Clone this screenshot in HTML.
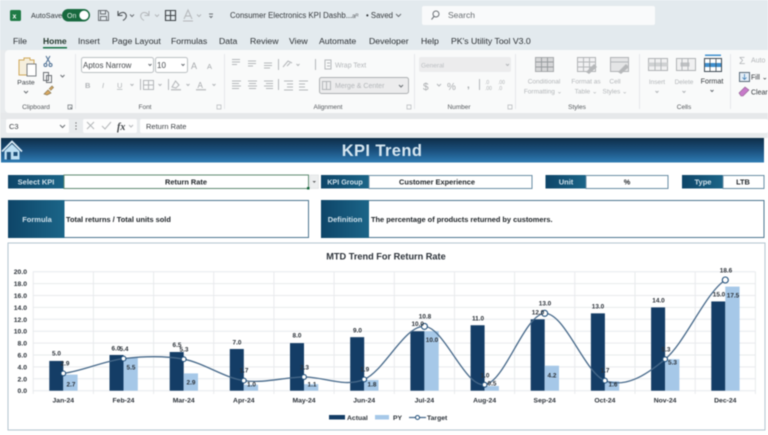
<!DOCTYPE html>
<html lang="en"><head><meta charset="utf-8"><title>KPI Trend</title>
<style>
html,body{margin:0;padding:0;background:#fff;width:768px;height:435px;overflow:hidden}
svg{display:block;filter:blur(.45px)}
text{font-family:"Liberation Sans",sans-serif}
.t{font-size:8.7px;fill:#2b2f33}
.s{font-size:6.5px;fill:#3c4145}
.g{font-size:6.5px;fill:#b3b6b9}
.l{font-size:6.5px;fill:#55595d}
.b{font-size:7.4px;font-weight:bold;fill:#1d2226}
.w{font-size:7.5px;font-weight:bold;fill:#cfe0ea}
.d{font-size:6.4px;font-weight:bold;fill:#2b3138;text-anchor:middle}
.a{font-size:6.8px;font-weight:bold;fill:#2b3138;text-anchor:end}
.m{font-size:6.8px;font-weight:bold;fill:#2b3138;text-anchor:middle}
.c{text-anchor:middle}
.ic{fill:none;stroke:#b4b7ba;stroke-width:1}
.ik{fill:none;stroke:#6b7075;stroke-width:1}
</style></head><body>
<svg width="768" height="435" viewBox="0 0 768 435" xmlns="http://www.w3.org/2000/svg">
<defs>
<linearGradient id="ban" x1="0" y1="0" x2="0" y2="1"><stop offset="0" stop-color="#0e2e48"/><stop offset=".5" stop-color="#1a4f7c"/><stop offset="1" stop-color="#2f7cb4"/></linearGradient>
<linearGradient id="lab" x1="0" y1="0" x2="1" y2="0"><stop offset="0" stop-color="#0e4568"/><stop offset="1" stop-color="#1b6588"/></linearGradient>
</defs>
<rect width="768" height="435" fill="#fff"/>
<rect width="768" height="138" fill="#e8ebed"/>
<rect width="768" height="50" fill="#e3eaee"/>

<!-- title bar -->
<rect x="10" y="10" width="11" height="11" rx="1.5" fill="#1f7a45"/><text x="12.5" y="18.5" style="font-size:7px;font-weight:bold;fill:#fff">x</text>
<text x="31" y="18" style="font-size:7.2px;fill:#33383c">AutoSave</text>
<rect x="62" y="9" width="28" height="12.5" rx="6.2" fill="#17693e"/><text x="67" y="18" style="font-size:7px;fill:#e4f0e9">On</text><circle cx="84" cy="15.2" r="4.6" fill="#fff"/>
<path d="M98.500 10.500h8l2 2v8h-10zM100.500 10.500v3.500h5v-3.500M100.500 20.500v-4h6v4" class="ik"/>
<path d="M118 11v4.500h4.500M118.500 15c2-3 6-3.500 7.500-.5 1 2.200-.5 4.500-3 6" fill="none" stroke="#4e5357" stroke-width="1.100"/><path d="M130 14.500l2 2 2-2" class="ik"/>
<path d="M149 11v4.500h-4.500M148.500 15c-2-3-6-3.500-7.500-.5-1 2.200.5 4.500 3 6" class="ic"/><path d="M155 14.500l2 2 2-2" class="ic"/>
<path d="M165.500 10.500h10v10h-10zM170.500 10.500v10M165.500 15.500h10" fill="none" stroke="#3f4448" stroke-width="1.100"/>
<path d="M184 19l4-9 4 9M185.500 16h5M183 21h10" class="ic"/><path d="M197 14.500l2 2 2-2" class="ic"/>
<path d="M209 14h4M209.500 16l1.500 1.500 1.500-1.500" class="ik"/>
<text x="230" y="18" style="font-size:7.8px;fill:#35393d">Consumer Electronics KPI Dashb...</text>
<text x="352" y="18" style="font-size:6.500px;fill:#55595d">aᴿ</text>
<text x="366" y="18" style="font-size:7.800px;fill:#35393d">• Saved</text><path d="M396 14l2.500 2.500 2.500-2.500" class="ik"/>
<rect x="422" y="6" width="233" height="19" rx="2" fill="#f9fafb"/>
<circle cx="436" cy="14" r="3" class="ik"/><path d="M434 16.500l-2.500 3" class="ik"/>
<text x="448" y="18" style="font-size:8.500px;fill:#686d71">Search</text>

<!-- tabs -->
<g class="t">
<text x="13" y="44" class="t">File</text>
<text x="43" y="44" class="t" style="font-weight:bold;font-size:8.500px;fill:#24382d">Home</text>
<text x="78" y="44" class="t">Insert</text>
<text x="112" y="44" class="t">Page Layout</text>
<text x="171" y="44" class="t">Formulas</text>
<text x="219" y="44" class="t">Data</text>
<text x="250" y="44" class="t">Review</text>
<text x="289" y="44" class="t">View</text>
<text x="319" y="44" class="t">Automate</text>
<text x="369" y="44" class="t">Developer</text>
<text x="421" y="44" class="t">Help</text>
<text x="451" y="44" class="t">PK's Utility Tool V3.0</text>
</g>
<rect x="43" y="47" width="24" height="1.500" fill="#1a7346"/>

<!-- ribbon -->
<rect x="5" y="50" width="780" height="63" rx="4" fill="#f9fafa"/>
<rect x="0" y="113" width="768" height="6" fill="#e6e8ea"/>
<g stroke="#e6e8ea" stroke-width="1">
<path d="M75.500 54v55M224.500 54v55M414.500 54v55M515.500 54v55M639.500 54v55M730.500 54v55"/>
</g>
<!-- clipboard -->
<path d="M19 60h5v-2h6v2h4v4h-7v11h-8z" fill="#f6efdd" stroke="#d0a95c" stroke-width="1"/>
<rect x="27" y="64" width="9" height="12" fill="#fff" stroke="#7a7f84"/>
<text x="26" y="84.500" class="s c" style="font-size:6.800px">Paste</text><path d="M24 91l2 2 2-2" class="ik"/>
<path d="M46 56l4 7M50 56l-4 7" class="ik" style="stroke:#4c6f93"/><circle cx="45.500" cy="65" r="1.500" class="ik" style="stroke:#4c6f93"/><circle cx="50.500" cy="65" r="1.500" class="ik" style="stroke:#4c6f93"/>
<path d="M43.500 72.500h5v8h-5zM46.500 75.500h5v7h-5z" class="ik"/>
<path d="M60.500 75l2 2 2-2" class="ik"/>
<path d="M44 94l4-4 3 3-4 2zM49 89l3-3 1.500 1.500-3 3" fill="#d9a860" stroke="#8b7a55" stroke-width=".7"/>
<text x="36" y="109" class="l c">Clipboard</text><path d="M68 105h4v4h-4zM70 107l2 2" class="ik" style="stroke-width:.7"/>
<!-- font -->
<rect x="81.500" y="57.500" width="72" height="15" rx="2" fill="#fff" stroke="#bcc0c3"/>
<text x="83" y="68" style="font-size:8px;fill:#45494d">Aptos Narrow</text><path d="M148.500 64l1.500 1.500 1.500-1.500" class="ik"/>
<rect x="155.500" y="57.500" width="32" height="15" rx="2" fill="#fff" stroke="#bcc0c3"/>
<text x="157" y="68" style="font-size:8px;fill:#45494d">10</text><path d="M181.500 64l1.500 1.500 1.500-1.500" class="ik"/>
<text x="191" y="69" style="font-size:9px;fill:#a5a8ab">A</text><text x="207" y="69" style="font-size:7.500px;fill:#a5a8ab">A</text>
<text x="85" y="88" style="font-size:7.500px;font-weight:bold;fill:#b0b3b6">B</text>
<text x="102" y="88" style="font-size:7.500px;font-style:italic;fill:#b0b3b6">I</text>
<text x="117" y="88" style="font-size:7.500px;text-decoration:underline;fill:#b0b3b6">U</text>
<path d="M130.500 84l1.500 1.500 1.500-1.500M158.500 84l1.500 1.500 1.500-1.500M186.500 84l1.500 1.500 1.500-1.500M212.500 84l1.500 1.500 1.500-1.500" class="ic"/>
<path d="M140.500 79v11M168.500 79v11" class="ic"/>
<path d="M143.500 80.500h10v9h-10zM148.500 80.500v9M143.500 85h10" class="ic"/>
<path d="M172 87l3.500-6 3.500 4-3 3z" class="ic"/><rect x="171" y="89" width="10" height="1.500" fill="#c2c4c6"/>
<text x="197.500" y="88" style="font-size:8px;fill:#a5a8ab">A</text><rect x="196" y="89" width="10" height="1.500" fill="#c2c4c6"/>
<text x="145" y="109" class="l c">Font</text><path d="M217 105h4v4h-4z" class="ic" style="stroke-width:.7"/>
<!-- alignment -->
<path d="M232 59.500h8M232 62h8M232 64.500h5M248 61h8M248 63.500h8M248 66h5M264 63h8M264 65.500h8M264 68h6" class="ic"/>
<path d="M278.500 59v11M315.500 59v11M278.500 79v11" class="ic"/>
<path d="M283 67l5-6 4 2M287 66l3-3" class="ic"/><path d="M296.500 64l1.500 1.500 1.500-1.500" class="ic"/>
<path d="M325 60h6v9h-6zM327 63h3M327 66h3" class="ic"/>
<text x="335" y="67.500" class="g" style="font-size:7px">Wrap Text</text>
<path d="M232 81h9M232 83.500h7M232 86h9M232 88.500h7M248 81h9M249 83.500h7M248 86h9M249 88.500h7M264 81h9M266 83.500h7M264 86h9M266 88.500h7M284 81h9M287 84h6M287 87h6M284 90h9M299 81h9M299 84h6M299 87h6M299 90h9" class="ic"/>
<rect x="319.500" y="77.500" width="89" height="16" rx="2" fill="#ececed" stroke="#aeb1b3"/>
<path d="M322.500 81.500h8v8h-8zM326.500 81.500v8" class="ic"/>
<text x="335" y="88" class="g" style="font-size:7px">Merge &amp; Center</text><path d="M399 85l2 2 2-2" class="ik"/>
<text x="328" y="109" class="l c">Alignment</text><path d="M407 105h4v4h-4z" class="ic" style="stroke-width:.7"/>
<!-- number -->
<rect x="419" y="57" width="92" height="15" rx="2" fill="#ececed"/>
<text x="421" y="67.500" style="font-size:6.500px;fill:#bcbfc2">General</text><path d="M506 64l1.500 1.500 1.500-1.500" class="ic"/>
<text x="423" y="90" style="font-size:10px;fill:#a8abae">$</text><path d="M437 84l2 2 2-2" class="ic"/>
<text x="447" y="90" style="font-size:10px;fill:#a8abae">%</text><text x="467" y="88" style="font-size:10px;font-weight:bold;fill:#a8abae">,</text>
<path d="M479.500 79v11" class="ic"/>
<text x="485" y="84" style="font-size:5px;fill:#b0b3b6">.0</text><text x="485" y="90" style="font-size:5px;fill:#b0b3b6">.00</text>
<text x="498" y="84" style="font-size:5px;fill:#b0b3b6">.00</text><text x="498" y="90" style="font-size:5px;fill:#b0b3b6">.0</text>
<text x="459" y="109" class="l c">Number</text><path d="M508 105h4v4h-4z" class="ic" style="stroke-width:.7"/>
<!-- styles -->
<g>
<rect x="535.500" y="57.500" width="18" height="14" fill="#d6d7d8" stroke="#a7aaac"/><path d="M541.500 57.500v14M547.500 57.500v14M535.500 62h18M535.500 67h18" class="ic" style="stroke:#999c9f"/>
<rect x="577.500" y="57.500" width="18" height="14" fill="#f1f1f2" stroke="#b0b3b5"/><path d="M583.500 57.500v14M589.500 57.500v14M577.500 62h18M577.500 67h18" class="ic"/><path d="M586 72l8-8 3 3-8 7z" fill="#b6b8ba"/>
<rect x="610.500" y="57.500" width="18" height="14" fill="#e4e5e6" stroke="#b0b3b5"/><path d="M610.500 62h18" class="ic"/><path d="M618 72l8-8 3 3-8 7z" fill="#b6b8ba"/>
</g>
<g class="g">
<text x="544" y="83.500" class="g c">Conditional</text><text x="543" y="93.500" class="g c">Formatting ⌄</text>
<text x="586" y="83.500" class="g c">Format as</text><text x="586" y="93.500" class="g c">Table ⌄</text>
<text x="615" y="83.500" class="g c">Cell</text><text x="615" y="93.500" class="g c">Styles ⌄</text>
</g>
<text x="577" y="109" class="l c">Styles</text>
<!-- cells -->
<rect x="648.500" y="58.500" width="19" height="12" fill="#f0f0f1" stroke="#b0b3b5"/><rect x="648.500" y="62.500" width="19" height="4" fill="#cfd1d2"/><path d="M655 58.500v12M661 58.500v12" class="ic"/>
<rect x="676.500" y="58.500" width="19" height="12" fill="#f0f0f1" stroke="#b0b3b5"/><rect x="680.500" y="62.500" width="9" height="4" fill="#bfc1c3"/><path d="M682 58.500v12M688 58.500v12" class="ic"/>
<rect x="704.500" y="58.500" width="17" height="13" fill="#fff" stroke="#3e4a54"/><rect x="705" y="63" width="16" height="4" fill="#3f8fcd"/><path d="M710 58.500v13M716 58.500v13" fill="none" stroke="#3e4a54" stroke-width=".8"/><rect x="705" y="54.500" width="16" height="1.500" fill="#3f8fcd"/>
<text x="657" y="84" class="g c">Insert</text><text x="684" y="84" class="g c">Delete</text><text x="712" y="83.500" class="s c" style="font-size:7.200px;fill:#33373b">Format</text>
<path d="M655.500 91l1.500 1.500 1.500-1.500M682.500 91l1.500 1.500 1.500-1.500" class="ic"/><path d="M710.500 90l1.500 1.500 1.500-1.500" class="ik"/>
<text x="684" y="109" class="l c">Cells</text>
<!-- editing -->
<text x="739" y="64" style="font-size:10px;fill:#b0b3b6">Σ</text><text x="751" y="62.500" class="g" style="font-size:7px">Auto</text>
<rect x="739.500" y="72.500" width="10" height="9" fill="#e4eef7" stroke="#5a6b7a"/><path d="M744.500 74v5M742.500 77.500l2 2 2-2" fill="none" stroke="#3f7fb6" stroke-width=".8"/>
<text x="751" y="79.500" class="s" style="font-size:7px;fill:#33373b">Fill ⌄</text>
<path d="M739 93l6-6 4 3-6 6-2 0z" fill="#c77ac9" stroke="#8d5f8f" stroke-width=".6"/>
<text x="751" y="94.500" class="s" style="font-size:7px;fill:#33373b">Clear</text>

<!-- formula bar -->
<rect x="6" y="119" width="63" height="14" rx="2" fill="#fdfdfd"/>
<text x="9" y="129" style="font-size:7.500px;fill:#3b3f43">C3</text><path d="M60 125l2.500 2.500 2.500-2.500" class="ik"/>
<circle cx="76" cy="123" r=".6" fill="#555"/><circle cx="76" cy="126" r=".6" fill="#555"/><circle cx="76" cy="129" r=".6" fill="#555"/>
<rect x="83" y="119" width="54" height="14" rx="2" fill="#fdfdfd"/>
<path d="M87 122l7 7M94 122l-7 7M102 126l3 3 6-7" class="ic"/>
<text x="117" y="130" style="font-family:'Liberation Serif',serif;font-style:italic;font-weight:bold;font-size:10px;fill:#3b3f43">fx</text><path d="M129 125l2 2 2-2" class="ic"/>
<rect x="140" y="119" width="628" height="14" rx="2" fill="#fff"/>
<text x="146" y="129" style="font-size:7.500px;fill:#3b3f43">Return Rate</text>

<!-- banner -->
<rect x="1" y="138" width="763" height="24.500" fill="url(#ban)"/>
<path d="M2 151.500L12 141.500 22 151.500" fill="none" stroke="#d9ebf7" stroke-width="1.800"/>
<path d="M4.500 151l7.500-7 7.500 7v8.500h-15z" fill="#bcdff3"/>
<rect x="6.800" y="152" width="4" height="7.500" fill="#1d4f78"/><rect x="13.500" y="152" width="4" height="4" fill="#1d4f78"/>
<text x="382" y="156" class="c" style="font-size:16.500px;font-weight:bold;fill:#d6e6f0;letter-spacing:.4px">KPI Trend</text>

<!-- row 1 -->
<rect x="8" y="175" width="56" height="13.500" fill="url(#lab)"/><text x="36" y="184.500" class="w c">Select KPI</text>
<rect x="64" y="175" width="244.500" height="13.500" fill="#fff" stroke="#5f8a72"/><text x="186" y="184.500" class="b c">Return Rate</text>
<rect x="307" y="187" width="2.500" height="2.500" fill="#17693e"/>
<rect x="310" y="175" width="8.500" height="13.500" fill="#eceeef" stroke="#d9dcde" stroke-width=".6"/><path d="M312.500 181h3.500l-1.750 2z" fill="#666"/>
<rect x="321" y="175" width="48" height="13.500" fill="url(#lab)"/><text x="345" y="184.500" class="w c" style="font-size:7.200px">KPI Group</text>
<rect x="369" y="175.500" width="163" height="13" fill="#fff" stroke="#6a8ea5"/><text x="437" y="184.500" class="b c">Customer Experience</text>
<rect x="545.500" y="175" width="41" height="13.500" fill="url(#lab)"/><text x="566" y="184.500" class="w c">Unit</text>
<rect x="586" y="175.500" width="82" height="13" fill="#fff" stroke="#6a8ea5"/><text x="627" y="184.500" class="b c">%</text>
<rect x="682" y="175" width="41.500" height="13.500" fill="url(#lab)"/><text x="703" y="184.500" class="w c">Type</text>
<rect x="723" y="175.500" width="41" height="13" fill="#fff" stroke="#6a8ea5"/><text x="743" y="184.500" class="b c">LTB</text>

<!-- row 2 -->
<rect x="8.500" y="200.500" width="300" height="37" fill="#fff" stroke="#4c7690"/>
<rect x="8" y="200" width="56.500" height="38" fill="url(#lab)"/><text x="37" y="222" class="w c">Formula</text>
<text x="66" y="222" class="b">Total returns / Total units sold</text>
<rect x="321.500" y="200.500" width="442.500" height="37" fill="#fff" stroke="#4c7690"/>
<rect x="321" y="200" width="48" height="38" fill="url(#lab)"/><text x="345" y="222" class="w c">Definition</text>
<text x="371" y="222" class="b">The percentage of products returned by customers.</text>

<!-- chart -->
<rect x="8" y="243" width="757" height="187" fill="#fff" stroke="#b4c4cf" stroke-width="1"/>
<text x="386" y="259.500" style="font-size:9.200px;font-weight:bold;fill:#2b3138" class="c">MTD Trend For Return Rate</text>
<path d="M33 271.700H755.400M33 283.600H755.400M33 295.500H755.400M33 307.400H755.400M33 319.300H755.400M33 331.200H755.400M33 343.100H755.400M33 355H755.400M33 366.900H755.400M33 378.800H755.400M33 390.700H755.400" stroke="#e8eaed" stroke-width="1" fill="none"/>
<path d="M33.200 271.700V394M93.400 271.700V394M153.600 271.700V394M213.700 271.700V394M273.900 271.700V394M334.100 271.700V394M394.300 271.700V394M454.500 271.700V394M514.600 271.700V394M574.800 271.700V394M635 271.700V394M695.200 271.700V394M755.400 271.700V394" stroke="#e8eaed" stroke-width="1" fill="none"/>

<g fill="#143d66">
<rect x="49.300" y="360.950" width="14" height="29.750"/>
<rect x="109.500" y="355" width="14" height="35.700"/>
<rect x="169.700" y="352" width="14" height="38.700"/>
<rect x="229.800" y="349" width="14" height="41.700"/>
<rect x="290" y="343.100" width="14" height="47.600"/>
<rect x="350.200" y="337.150" width="14" height="53.550"/>
<rect x="410.400" y="331.200" width="14" height="59.500"/>
<rect x="470.600" y="325.250" width="14" height="65.450"/>
<rect x="530.700" y="319.300" width="14" height="71.400"/>
<rect x="590.900" y="313.350" width="14" height="77.350"/>
<rect x="651.100" y="307.400" width="14" height="83.300"/>
<rect x="711.300" y="301.450" width="14" height="89.250"/>
</g>
<g fill="#a6c8e8">
<rect x="63.300" y="374.600" width="14.300" height="16.100"/>
<rect x="123.500" y="358" width="14.300" height="32.700"/>
<rect x="183.700" y="373.400" width="14.300" height="17.300"/>
<rect x="243.800" y="384.750" width="14.300" height="5.950"/>
<rect x="304" y="384.150" width="14.300" height="6.550"/>
<rect x="364.200" y="380" width="14.300" height="10.700"/>
<rect x="424.400" y="331.200" width="14.300" height="59.500"/>
<rect x="484.600" y="386" width="14.300" height="4.700"/>
<rect x="544.700" y="365.700" width="14.300" height="25"/>
<rect x="604.900" y="381.200" width="14.300" height="9.500"/>
<rect x="665.100" y="359.200" width="14.300" height="31.500"/>
<rect x="725.300" y="286.600" width="14.300" height="104.100"/>
</g>
<path d="M63.300 373.400C83.400 370.900 103.400 361 123.500 358.600C143.600 356.200 163.600 355.500 183.700 359.200C203.800 362.900 223.700 377.600 243.800 380.600C263.900 383.600 283.900 377.200 304 377C324.100 376.800 344.100 387.800 364.200 379.400C384.300 371 404.300 325.500 424.400 326.400C444.500 327.300 464.500 386.900 484.600 384.750C504.700 382.600 524.600 314 544.700 313.350C564.800 312.700 584.800 373 604.900 380.600C625 388.200 645 376 665.100 359.200C685.200 342.400 705.200 293.200 725.300 280" fill="none" stroke="#47698a" stroke-width="1.300"/>
<g fill="#fff" stroke="#1f4e79" stroke-width="1.100">
<circle cx="63.300" cy="373.400" r="2.400"/><circle cx="123.500" cy="358.600" r="2.400"/><circle cx="183.700" cy="359.200" r="2.400"/><circle cx="243.800" cy="380.600" r="2.400"/><circle cx="304" cy="377" r="2.400"/><circle cx="364.200" cy="379.400" r="2.400"/><circle cx="424.400" cy="326.400" r="3"/><circle cx="484.600" cy="384.750" r="2.400"/><circle cx="544.700" cy="313.350" r="3"/><circle cx="604.900" cy="380.600" r="2.400"/><circle cx="665.100" cy="359.200" r="2.400"/><circle cx="725.300" cy="280" r="3"/>
</g>

<!-- data labels -->
<g class="d">
<text class="d" x="56.500" y="355.500">5.0</text><text class="d" x="65" y="365.500">2.9</text><text class="d" x="71" y="386.500">2.7</text>
<text class="d" x="116" y="350.500">6.0</text><text class="d" x="124" y="351">5.4</text><text class="d" x="131" y="369.500">5.5</text>
<text class="d" x="177" y="347">6.5</text><text class="d" x="184" y="351.500">5.3</text><text class="d" x="191" y="384.500">2.9</text>
<text class="d" x="237" y="344.500">7.0</text><text class="d" x="244" y="372.500">1.7</text><text class="d" x="251.500" y="386.500">1.0</text>
<text class="d" x="297" y="337.500">8.0</text><text class="d" x="304.500" y="369.500">2.3</text><text class="d" x="312" y="386.500">1.1</text>
<text class="d" x="357.500" y="332.500">9.0</text><text class="d" x="364.700" y="371.500">1.9</text><text class="d" x="372" y="386.500">1.8</text>
<text class="d" x="417.700" y="326">10.0</text><text class="d" x="425" y="318.500">10.8</text><text class="d" x="432" y="342">10.0</text>
<text class="d" x="478" y="320.500">11.0</text><text class="d" x="485" y="377.500">1.0</text><text class="d" x="492" y="385.500">0.5</text>
<text class="d" x="538" y="314.500">12.0</text><text class="d" x="545" y="305.500">13.0</text><text class="d" x="552" y="377.500">4.2</text>
<text class="d" x="598" y="308.500">13.0</text><text class="d" x="605" y="372.500">1.7</text><text class="d" x="613" y="386.500">1.6</text>
<text class="d" x="658.500" y="302.500">14.0</text><text class="d" x="666" y="351.500">5.3</text><text class="d" x="672.500" y="364.500">5.3</text>
<text class="d" x="719" y="296.500">15.0</text><text class="d" x="726" y="272.500">18.6</text><text class="d" x="733" y="297.500">17.5</text>
</g>
<!-- axis -->
<text class="a" x="27" y="274.200">20.0</text><text class="a" x="27" y="286.100">18.0</text><text class="a" x="27" y="298">16.0</text><text class="a" x="27" y="309.900">14.0</text><text class="a" x="27" y="321.800">12.0</text><text class="a" x="27" y="333.700">10.0</text><text class="a" x="27" y="345.600">8.0</text><text class="a" x="27" y="357.500">6.0</text><text class="a" x="27" y="369.400">4.0</text><text class="a" x="27" y="381.300">2.0</text><text class="a" x="27" y="393.200">0.0</text>
<text class="m" x="63.300" y="402.500">Jan-24</text><text class="m" x="123.500" y="402.500">Feb-24</text><text class="m" x="183.700" y="402.500">Mar-24</text><text class="m" x="243.800" y="402.500">Apr-24</text><text class="m" x="304" y="402.500">May-24</text><text class="m" x="364.200" y="402.500">Jun-24</text><text class="m" x="424.400" y="402.500">Jul-24</text><text class="m" x="484.600" y="402.500">Aug-24</text><text class="m" x="544.700" y="402.500">Sep-24</text><text class="m" x="604.900" y="402.500">Oct-24</text><text class="m" x="665.100" y="402.500">Nov-24</text><text class="m" x="725.300" y="402.500">Dec-24</text>
<!-- legend -->
<rect x="329" y="415" width="16" height="4.500" fill="#143d66"/><text x="347" y="420" style="font-size:6.800px;font-weight:bold;fill:#2b3138">Actual</text>
<rect x="375" y="415" width="14" height="4.500" fill="#a6c8e8"/><text x="393" y="420" style="font-size:6.800px;font-weight:bold;fill:#2b3138">PY</text>
<path d="M409 417.500h17" stroke="#47698a" stroke-width="1.200"/><circle cx="417.500" cy="417.500" r="2" fill="#fff" stroke="#1f4e79"/><text x="427" y="420" style="font-size:6.800px;font-weight:bold;fill:#2b3138">Target</text>
</svg>
</body></html>
